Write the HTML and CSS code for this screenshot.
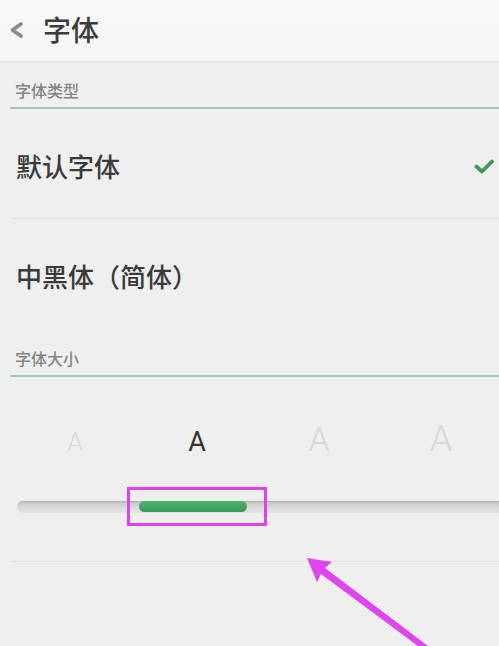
FILE: index.html
```html
<!DOCTYPE html>
<html lang="zh">
<head>
<meta charset="utf-8">
<link rel="stylesheet" href="styles.css">
</head>
<body>
<div class="page">
  <header class="topbar">
    <svg class="back" width="14" height="16" viewBox="0 0 14 16"><path d="M12 2 L3.5 8 L12 14" fill="none" stroke="#8a8a8a" stroke-width="3.6" stroke-linecap="round" stroke-linejoin="round"/></svg>
    <h1 class="title">字体</h1>
  </header>

  <div class="section">字体类型</div>
  <div class="item item-first">
    <span class="item-text">默认字体</span>
    <svg class="check" width="20" height="15" viewBox="0 0 20 15"><path d="M2.5 7.5 L8 12.5 L18 2.5" fill="none" stroke="#3a9a5a" stroke-width="3.8" stroke-linecap="round" stroke-linejoin="round"/></svg>
  </div>
  <div class="item item-second">
    <span class="item-text">中黑体（简体）</span>
  </div>

  <div class="section">字体大小</div>
  <div class="sizes">
    <span class="a a1">A</span>
    <span class="a a2">A</span>
    <span class="a a3">A</span>
    <span class="a a4">A</span>
  </div>
  <div class="track"><div class="thumb"></div></div>
  <div class="divider"></div>

  <div class="mark-box"></div>
  <svg class="arrow" width="499" height="646" viewBox="0 0 499 646"><polygon points="307,558 332,562 325,568 428,646 418,646 321,574 317,582" fill="#df45ee"/></svg>
</div>
</body>
</html>
```

FILE: styles.css
```css
html, body {
  margin: 0;
  padding: 0;
}
body {
  background: #efefef;
  font-family: "Noto Sans CJK SC", "Noto Sans", sans-serif;
  width: 499px;
  height: 646px;
  overflow: hidden;
}
.page {
  position: relative;
  width: 499px;
  height: 646px;
  display: flex;
  flex-direction: column;
}
.topbar {
  height: 61px;
  display: flex;
  align-items: center;
  padding-left: 9px;
  background: linear-gradient(#fafafa, #f4f4f4);
  border-bottom: 1px solid #e4e4e4;
  box-shadow: 0 1px 2px rgba(0,0,0,0.04);
}
.back {
  display: block;
  margin-top: -1px;
}
.title {
  margin: 0 0 0 20px;
  font-size: 28px;
  font-weight: 500;
  line-height: 1;
  color: #3c3c3c;
  margin-top: -4px;
}
.section {
  margin-left: 10px;
  padding: 20px 0 9px 5px;
  font-size: 16px;
  line-height: 16px;
  color: #858585;
  font-weight: 500;
  border-bottom: 2px solid #a7c7bb;
}
.item {
  margin-left: 10px;
  display: flex;
  align-items: center;
  justify-content: space-between;
  padding-right: 5px;
}
.item-first {
  padding-top: 44px;
  padding-bottom: 39px;
  border-bottom: 1px solid #e3e3e3;
}
.item-second {
  padding-top: 44px;
  padding-bottom: 41px;
}
.item-text {
  padding-left: 6px;
  font-size: 26px;
  line-height: 26px;
  font-weight: 500;
  color: #3a3a3a;
}
.check {
  display: block;
}
.sizes {
  display: grid;
  grid-template-columns: repeat(4, 122px);
  margin-left: 14px;
  padding-top: 44px;
  align-items: baseline;
  font-family: Roboto, "Noto Sans", sans-serif;
  line-height: 1;
}
.a {
  text-align: center;
}
.a1 { font-size: 25px; font-weight: 300; color: #dadada; }
.a2 { font-size: 27px; font-weight: 400; color: #333333; }
.a3 { font-size: 33px; font-weight: 300; color: #d7d7d7; }
.a4 { font-size: 36px; font-weight: 300; color: #d7d7d7; }
.track {
  margin-top: 44px;
  margin-left: 17px;
  height: 12px;
  border-radius: 6px 0 0 6px;
  background: linear-gradient(#c4c4c4, #dcdcdc 60%, #e4e4e4);
  box-shadow: inset 0 1px 1px rgba(0,0,0,0.12);
}
.thumb {
  margin-left: 122px;
  width: 108px;
  height: 11px;
  border-radius: 6px;
  background: linear-gradient(#4db46d, #379a57);
}
.divider {
  margin-top: 48px;
  margin-left: 10px;
  border-top: 1px solid #e2e2e2;
}
.mark-box {
  position: absolute;
  left: 127px;
  top: 487px;
  width: 134px;
  height: 33px;
  border: 3px solid #e23ff0;
}
.arrow {
  position: absolute;
  left: 0;
  top: 0;
}
```
